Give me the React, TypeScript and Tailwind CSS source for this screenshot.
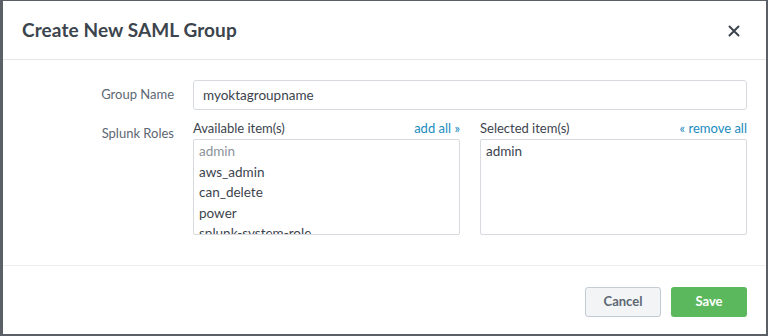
import React from "react";

const available = ["admin", "aws_admin", "can_delete", "power", "splunk-system-role"];

export default function App() {
  return (
    <div
      className="w-[768px] h-[336px] bg-[#5b6067] pl-[3px] pr-[2px] pt-[1px] pb-[2px] overflow-hidden"
      style={{ fontFamily: "Lato, 'Open Sans', sans-serif" }}
    >
      <div className="w-full h-full bg-white flex flex-col">
        <div className="h-[59px] flex items-center justify-between pl-[19px] pr-[26px] border-b border-[#e6e6e6] shrink-0">
          <h1 className="text-[19px] font-bold text-[#3c444d] tracking-[0.1px] pt-[1px]">Create New SAML Group</h1>
          <svg width="12" height="12" viewBox="0 0 12 12" className="mt-[2px]">
            <path d="M1.5 1.5 L10.5 10.5 M10.5 1.5 L1.5 10.5" stroke="#3c444d" strokeWidth="2" strokeLinecap="round" />
          </svg>
        </div>
        <div className="flex-1 pt-[20px] pr-[19px] flex flex-col gap-[10px]">
          <div className="flex items-center">
            <div className="w-[171px] text-right text-[13px] text-[#5c6773]">Group Name</div>
            <div className="ml-[19px] flex-1 h-[30px] border border-[#d7dbdf] rounded-[3px] flex items-center pl-[9px] text-[13.5px] text-[#3c444d]">
              myoktagroupname
            </div>
          </div>
          <div className="flex items-start">
            <div className="w-[171px] text-right text-[13px] text-[#5c6773] pt-[4px]">Splunk Roles</div>
            <div className="ml-[19px] flex-1 flex gap-[20px]">
              <div className="flex-1 flex flex-col">
                <div className="flex justify-between items-center h-[18px] text-[13px]">
                  <span className="text-[#3c444d]">Available item(s)</span>
                  <span className="text-[#1a8bc0]">add all »</span>
                </div>
                <div className="mt-[1px] h-[96px] border border-[#d7dbdf] rounded-[2px] overflow-hidden pl-[5px] pt-[1px] text-[13.5px]">
                  {available.map((a, i) => (
                    <div key={a} className={`h-[20.5px] leading-[20px] ${i === 0 ? "text-[#8c939a]" : "text-[#3c444d]"}`}>
                      {a}
                    </div>
                  ))}
                </div>
              </div>
              <div className="flex-1 flex flex-col">
                <div className="flex justify-between items-center h-[18px] text-[13px]">
                  <span className="text-[#3c444d]">Selected item(s)</span>
                  <span className="text-[#1a8bc0]">« remove all</span>
                </div>
                <div className="mt-[1px] h-[96px] border border-[#d7dbdf] rounded-[2px] overflow-hidden pl-[5px] pt-[1px] text-[13.5px]">
                  <div className="h-[20.5px] leading-[20px] text-[#3c444d]">admin</div>
                </div>
              </div>
            </div>
          </div>
        </div>
        <div className="h-[69px] border-t border-[#eeeeee] flex items-center justify-end gap-[10px] pr-[19px] pt-[3px] shrink-0">
          <button className="w-[76px] h-[30px] border border-[#c3cbd4] rounded-[3px] bg-[#f2f4f5] text-[13px] font-bold text-[#5c6773]">
            Cancel
          </button>
          <button className="w-[76px] h-[30px] rounded-[3px] bg-[#5cb85c] text-[13px] font-bold text-white">
            Save
          </button>
        </div>
      </div>
    </div>
  );
}
